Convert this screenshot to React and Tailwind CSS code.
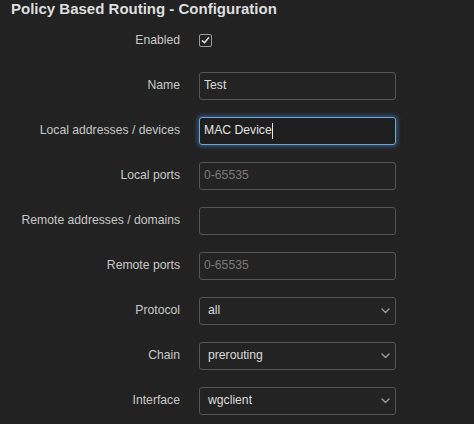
import React from 'react';

const font = { fontFamily: '"Liberation Sans", Arial, sans-serif' };

function Chevron() {
  return (
    <svg className="w-[9px] h-[6px] text-[#9a9a9a]" viewBox="0 0 9 6" fill="none" stroke="currentColor">
      <path d="M1 1l3.5 3.5L8 1" strokeWidth={1.4} strokeLinecap="round" strokeLinejoin="round" />
    </svg>
  );
}

function Row({ label, children }) {
  return (
    <div className="flex items-center h-[45px]">
      <div className="w-[180px] text-right text-[12.2px] text-[#c8c8c8]">{label}</div>
      <div className="ml-[19px]">{children}</div>
    </div>
  );
}

function TextBox({ value, placeholder, focused }) {
  return (
    <div
      className={
        focused
          ? 'w-[197px] h-[28px] rounded-[3px] border border-[#6aa6dc] bg-[#1e1e1e] shadow-[0_0_5px_1px_rgba(80,150,220,0.55)] flex items-center pl-[4px] text-[12.2px] text-[#e2e2e2]'
          : 'w-[197px] h-[28px] rounded-[3px] border border-[#555555] bg-[#232323] flex items-center pl-[4px] text-[12.2px] text-[#dcdcdc]'
      }
    >
      {value ? <span>{value}</span> : <span className="text-[#7a7a7a]">{placeholder}</span>}
      {focused && <span className="w-[1px] h-[16px] bg-[#e8e8e8]" />}
    </div>
  );
}

function SelectBox({ value }) {
  return (
    <div className="w-[197px] h-[28px] rounded-[3px] border border-[#555555] bg-[#232323] flex items-center justify-between pl-[8px] pr-[5px] text-[12.2px] text-[#dcdcdc]">
      <span>{value}</span>
      <Chevron />
    </div>
  );
}

export default function App() {
  return (
    <div className="w-[474px] h-[424px] bg-[#222222] overflow-hidden" style={font}>
      <div className="h-[18px] pl-[11px] text-[15px] leading-[18px] font-bold text-[#dedede]">
        Policy Based Routing - Configuration
      </div>
      <Row label="Enabled">
        <div className="w-[13px] h-[13px] border border-[#9a9a9a] rounded-[2px] flex items-center justify-center">
          <svg className="w-[9px] h-[9px] text-[#e6e6e6]" viewBox="0 0 10 10" fill="none" stroke="currentColor">
            <path d="M1.5 5.2l2.3 2.3L8.5 2" strokeWidth={1.6} strokeLinecap="round" strokeLinejoin="round" />
          </svg>
        </div>
      </Row>
      <Row label="Name">
        <TextBox value="Test" />
      </Row>
      <Row label="Local addresses / devices">
        <TextBox value="MAC Device" focused />
      </Row>
      <Row label="Local ports">
        <TextBox placeholder="0-65535" />
      </Row>
      <Row label="Remote addresses / domains">
        <TextBox />
      </Row>
      <Row label="Remote ports">
        <TextBox placeholder="0-65535" />
      </Row>
      <Row label="Protocol">
        <SelectBox value="all" />
      </Row>
      <Row label="Chain">
        <SelectBox value="prerouting" />
      </Row>
      <Row label="Interface">
        <SelectBox value="wgclient" />
      </Row>
    </div>
  );
}
